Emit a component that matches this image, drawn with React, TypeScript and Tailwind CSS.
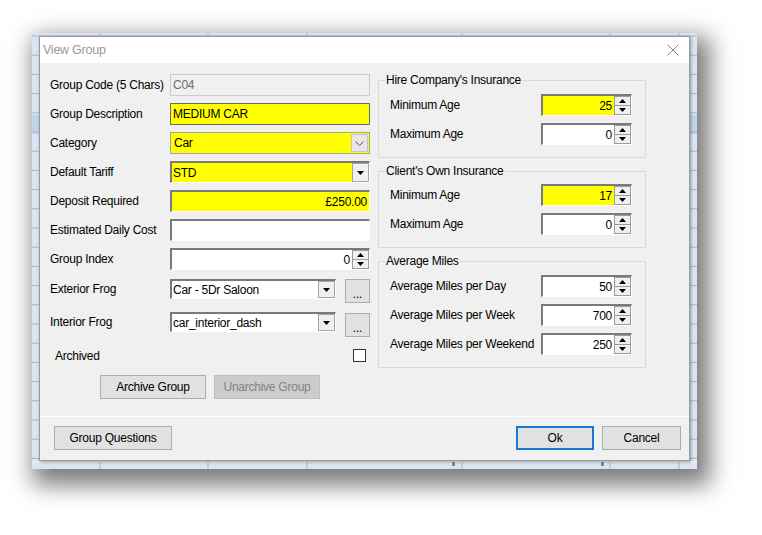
import React from "react";

const sunken =
  "border-t-2 border-l-2 border-t-[#7a7a7a] border-l-[#7a7a7a] border-b border-r border-b-white border-r-white";

function Up() {
  return (
    <svg width="7" height="4" viewBox="0 0 7 4">
      <path d="M0 4 L3.5 0 L7 4Z" fill="#000" />
    </svg>
  );
}
function Down() {
  return (
    <svg width="7" height="4" viewBox="0 0 7 4">
      <path d="M0 0 L3.5 4 L7 0Z" fill="#000" />
    </svg>
  );
}

function SpinBtns() {
  return (
    <div className="flex w-[17px] flex-col border border-[#9a9a9a] bg-[#f0f0f0]">
      <div className="flex flex-1 items-center justify-center border-b border-[#9a9a9a]">
        <Up />
      </div>
      <div className="flex flex-1 items-center justify-center">
        <Down />
      </div>
    </div>
  );
}

function Spin({ value, yellow }: { value: string; yellow?: boolean }) {
  return (
    <div className={`flex h-[22px] w-[91px] bg-white ${sunken}`}>
      <div
        className={`flex flex-1 items-center justify-end pr-[2px] ${
          yellow ? "bg-[#ffff00]" : "bg-white"
        }`}
      >
        {value}
      </div>
      <SpinBtns />
    </div>
  );
}

function DropBtn() {
  return (
    <div className="flex w-[17px] items-center justify-center border border-[#a5a5a5] bg-[#f0f0f0]">
      <Down />
    </div>
  );
}

function Btn({
  children,
  w,
  kind,
}: {
  children: React.ReactNode;
  w: string;
  kind?: "disabled" | "default";
}) {
  const cls =
    kind === "disabled"
      ? "border-[#bfbfbf] bg-[#cccccc] text-[#838383]"
      : kind === "default"
      ? "border-2 border-[#1a78d4] bg-[#e1e1e1] text-black"
      : "border-[#adadad] bg-[#e1e1e1] text-black";
  return (
    <div
      className={`flex h-[24px] items-center justify-center border ${cls} ${w}`}
    >
      {children}
    </div>
  );
}

function Row({ label, children }: { label: string; children: React.ReactNode }) {
  return (
    <div className="flex h-[22px] items-center">
      <div className="w-[120px]">{label}</div>
      <div className="flex h-full w-[200px]">{children}</div>
    </div>
  );
}

function Group({
  title,
  rows,
  tight,
}: {
  title: string;
  rows: { label: string; value: string; yellow?: boolean }[];
  tight?: boolean;
}) {
  return (
    <fieldset className="m-0 border border-[#d9d9d9] p-0">
      <legend className="ml-[6px] px-[1px] leading-[14px]">{title}</legend>
      <div
        className={`flex flex-col gap-[7px] pb-[12px] pl-[11px] pr-[13px] ${
          tight ? "pt-[6px]" : "pt-[7px]"
        }`}
      >
        {rows.map((r) => (
          <div key={r.label} className="flex items-center">
            <div className="flex-1">{r.label}</div>
            <Spin value={r.value} yellow={r.yellow} />
          </div>
        ))}
      </div>
    </fieldset>
  );
}

function GridBg() {
  const hLines: number[] = [];
  for (let i = 0; i < 23; i++) hLines.push(3 + i * 19.2);
  const vLines = [68, 176, 275, 430, 578, 647];
  return (
    <svg
      className="absolute inset-0"
      width="665"
      height="436"
      viewBox="0 0 665 436"
    >
      <rect width="665" height="436" fill="#dae5f1" />
      <rect x="0" y="82" width="665" height="19" fill="#c3d5ea" />
      {hLines.map((y) => (
        <line key={y} x1="0" x2="665" y1={y} y2={y} stroke="#a9b5c3" strokeWidth="1" />
      ))}
      {vLines.map((x) => (
        <line key={x} x1={x} x2={x} y1="0" y2="436" stroke="#a9b5c3" strokeWidth="1" />
      ))}
      <line x1="0" x2="665" y1="429" y2="429" stroke="#f4f8fc" strokeWidth="1" />
      <rect x="420" y="429" width="3" height="4" fill="#8a8a8a" />
      <rect x="569" y="429" width="3" height="4" fill="#8a8a8a" />
    </svg>
  );
}

export default function App() {
  return (
    <div className="h-[535px] w-[762px] overflow-hidden bg-white pl-[32px] pt-[33px] font-['Liberation_Sans',Arial,sans-serif] text-[12px] tracking-[-0.25px] text-black">
      <div className="relative h-[436px] w-[665px] pl-[7px] pt-[3px] shadow-[7px_10px_22px_6px_rgba(0,0,0,0.52)]">
        <GridBg />
        <div className="relative flex h-[425px] w-[651px] flex-col border border-[#9b9b9b] bg-[#f0f0f0] shadow-[1px_1px_3px_rgba(0,0,0,0.35)]">
          {/* title bar */}
          <div className="flex h-[26px] items-center justify-between bg-white pl-[3px] pr-[10px]">
            <span className="text-[12.5px] text-[#999999]">View Group</span>
            <svg width="12" height="12" viewBox="0 0 12 12">
              <path d="M0.5 0.5 L11.5 11.5 M11.5 0.5 L0.5 11.5" stroke="#8a8a8a" strokeWidth="1" />
            </svg>
          </div>

          {/* body */}
          <div className="flex h-[353px] gap-[8px] pl-[10px]">
            {/* left column */}
            <div className="flex w-[320px] flex-col pt-[11px]">
              <div className="flex flex-col gap-[7px]">
                <Row label="Group Code (5 Chars)">
                  <div className="flex flex-1 items-center border border-[#cccccc] bg-[#f0f0f0] pl-[2px] text-[#6d6d6d]">
                    C04
                  </div>
                </Row>
                <Row label="Group Description">
                  <div className="flex flex-1 items-center border border-[#6b6b6b] bg-[#ffff00] pl-[2px]">
                    MEDIUM CAR
                  </div>
                </Row>
                <Row label="Category">
                  <div className="flex flex-1 border border-[#a5a5a5] bg-[#ffff00] p-[1px]">
                    <div className="flex flex-1 items-center pl-[2px]">Car</div>
                    <div className="flex w-[17px] items-center justify-center border border-[#c4c4c4] bg-[#e6e6e6]">
                      <svg width="9" height="5" viewBox="0 0 9 5">
                        <path d="M0.5 0.5 L4.5 4.5 L8.5 0.5" stroke="#555" strokeWidth="1" fill="none" />
                      </svg>
                    </div>
                  </div>
                </Row>
                <Row label="Default Tariff">
                  <div className={`flex flex-1 bg-[#ffff00] ${sunken}`}>
                    <div className="flex flex-1 items-center pl-[1px]">STD</div>
                    <DropBtn />
                  </div>
                </Row>
                <Row label="Deposit Required">
                  <div className={`flex flex-1 items-center justify-end bg-[#ffff00] pr-[2px] ${sunken}`}>
                    £250.00
                  </div>
                </Row>
                <Row label="Estimated Daily Cost">
                  <div className={`flex-1 bg-white ${sunken}`} />
                </Row>
                <Row label="Group Index">
                  <div className={`flex flex-1 bg-white ${sunken}`}>
                    <div className="flex flex-1 items-center justify-end pr-[2px]">0</div>
                    <SpinBtns />
                  </div>
                </Row>
              </div>

              <div className="mt-[9px] flex h-[24px] items-start">
                <div className="w-[120px] leading-[20px]">Exterior Frog</div>
                <div className={`flex h-[20px] w-[166px] bg-white ${sunken}`}>
                  <div className="flex flex-1 items-center pl-[1px]">Car - 5Dr Saloon</div>
                  <DropBtn />
                </div>
                <div className="ml-[9px] flex h-[24px] w-[25px] items-end justify-center border border-[#adadad] bg-[#e1e1e1] pb-[3px] leading-[10px]">
                  ...
                </div>
              </div>

              <div className="mt-[9px] flex h-[25px] items-start">
                <div className="w-[120px] leading-[20px]">Interior Frog</div>
                <div className={`flex h-[20px] w-[166px] bg-white ${sunken}`}>
                  <div className="flex flex-1 items-center pl-[1px]">car_interior_dash</div>
                  <DropBtn />
                </div>
                <div className="ml-[9px] mt-[1px] flex h-[24px] w-[25px] items-end justify-center border border-[#adadad] bg-[#e1e1e1] pb-[3px] leading-[10px]">
                  ...
                </div>
              </div>

              <div className="mt-[12px] flex h-[13px] items-center justify-between pl-[5px] pr-[4px]">
                <span>Archived</span>
                <div className="h-[13px] w-[13px] border border-[#333333] bg-white" />
              </div>

              <div className="mt-[13px] flex gap-[8px] pl-[50px]">
                <Btn w="w-[106px]">Archive Group</Btn>
                <Btn w="w-[106px]" kind="disabled">
                  Unarchive Group
                </Btn>
              </div>
            </div>

            {/* right column */}
            <div className="flex w-[268px] flex-col gap-[6px] pt-[10px]">
              <Group
                title="Hire Company's Insurance"
                rows={[
                  { label: "Minimum Age", value: "25", yellow: true },
                  { label: "Maximum Age", value: "0" },
                ]}
              />
              <Group
                tight
                title="Client's Own Insurance"
                rows={[
                  { label: "Minimum Age", value: "17", yellow: true },
                  { label: "Maximum Age", value: "0" },
                ]}
              />
              <Group
                title="Average Miles"
                rows={[
                  { label: "Average Miles per Day", value: "50" },
                  { label: "Average Miles per Week", value: "700" },
                  { label: "Average Miles per Weekend", value: "250" },
                ]}
              />
            </div>
          </div>

          {/* footer */}
          <div className="flex flex-1 items-start justify-between border-t border-white pl-[14px] pr-[8px] pt-[9px]">
            <Btn w="w-[118px]">Group Questions</Btn>
            <div className="flex gap-[8px]">
              <Btn w="w-[78px]" kind="default">
                Ok
              </Btn>
              <Btn w="w-[79px]">Cancel</Btn>
            </div>
          </div>
        </div>
      </div>
    </div>
  );
}
